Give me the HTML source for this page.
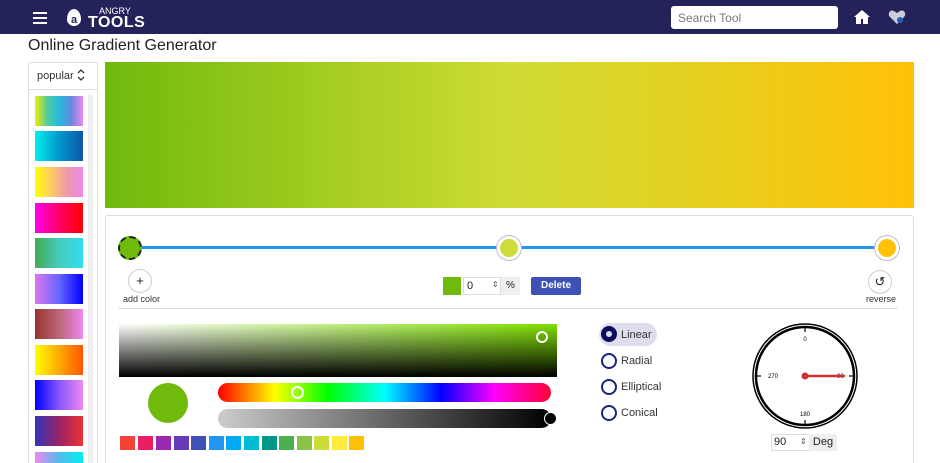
<!DOCTYPE html><html><head><style>
*{box-sizing:border-box;margin:0;padding:0}
html,body{width:940px;height:463px;overflow:hidden}
body{background:#fff;font-family:"Liberation Sans",sans-serif;position:relative;color:#222}
.a{position:absolute}
.sw{position:absolute;left:35px;width:48px;height:30px}
.pal{position:absolute;top:436px;width:15px;height:14px}
.rb{position:absolute;left:601px;width:16px;height:16px;border:2px solid #1a237e;border-radius:50%}
.rl{position:absolute;left:621px;font-size:11px;color:#333}
</style></head><body>
<div class="a" style="left:0;top:0;width:940px;height:34px;background:#23235a"></div>
<div class="a" style="left:33px;top:12px;width:14px;height:2px;background:#fff;box-shadow:0 5px 0 #fff,0 10px 0 #fff"></div>
<div class="a" style="left:67px;top:9px;width:14px;height:17px;border-radius:50% 50% 50% 50%/60% 60% 40% 40%;background:#fff"></div>
<div class="a" style="left:71px;top:14px;font-size:11px;font-weight:bold;color:#23235a">a</div>
<div class="a" style="left:99px;top:6px;font-size:9px;color:#fff">ANGRY</div>
<div class="a" style="left:88px;top:14px;font-size:16px;font-weight:bold;color:#fff;letter-spacing:.5px">TOOLS</div>
<div class="a" style="left:671px;top:6px;width:167px;height:23px;background:#fff;border-radius:3px;font-size:12px;color:#777;padding:5px 7px">Search Tool</div>
<svg class="a" style="left:853px;top:9px" width="18" height="16" viewBox="0 0 18 16"><path d="M9 1L1 8h2v7h5v-5h2v5h5V8h2z" fill="#fff"/></svg>
<svg class="a" style="left:888px;top:9px" width="18" height="16" viewBox="0 0 18 16"><path d="M9 15L2 8C-1 5 2 0 6 2L9 4L12 2C16 0 19 5 16 8z" fill="#ccd"/><circle cx="12" cy="11" r="3" fill="#1e5fb4"/></svg>
<div class="a" style="left:28px;top:37px;font-size:16px;color:#222">Online Gradient Generator</div>
<div class="a" style="left:28px;top:62px;width:70px;height:420px;border:1px solid #ddd;border-radius:3px"></div>
<div class="a" style="left:28px;top:89px;width:70px;height:1px;background:#ddd"></div>
<div class="a" style="left:37px;top:70px;font-size:11px;color:#333">popular</div>
<svg class="a" style="left:77px;top:68px" width="8" height="14" viewBox="0 0 8 14"><path d="M1 5L4 2L7 5M1 9L4 12L7 9" fill="none" stroke="#333" stroke-width="1.3"/></svg>
<div class="a" style="left:88px;top:95px;width:5px;height:368px;background:#eee"></div>
<div class="sw" style="top:96px;background:linear-gradient(90deg,#ee0,#5c9,#2bd,#68d,#e8e)"></div>
<div class="sw" style="top:131px;background:linear-gradient(90deg,#0ee,#09c,#15a)"></div>
<div class="sw" style="top:167px;background:linear-gradient(90deg,#ff0,#fc6,#e9a,#e8e)"></div>
<div class="sw" style="top:203px;background:linear-gradient(90deg,#f0e,#f06,#f00)"></div>
<div class="sw" style="top:238px;background:linear-gradient(90deg,#4a5,#4cb,#3de)"></div>
<div class="sw" style="top:274px;background:linear-gradient(90deg,#d7e,#66f,#00f)"></div>
<div class="sw" style="top:309px;background:linear-gradient(90deg,#933,#b67,#e8e)"></div>
<div class="sw" style="top:345px;background:linear-gradient(90deg,#ff0,#fa0,#f50)"></div>
<div class="sw" style="top:380px;background:linear-gradient(90deg,#00f,#85f,#e8e)"></div>
<div class="sw" style="top:416px;background:linear-gradient(90deg,#33b,#926,#e33)"></div>
<div class="sw" style="top:452px;height:11px;background:linear-gradient(90deg,#e8e,#5be,#0ee)"></div>
<div class="a" style="left:105px;top:62px;width:809px;height:146px;background:linear-gradient(90deg,#6fba0b,#cfdc35 50%,#ffc107)"></div>
<div class="a" style="left:105px;top:215px;width:809px;height:270px;border:1px solid #ddd;border-radius:3px"></div>
<div class="a" style="left:130px;top:246px;width:757px;height:3px;background:#2196f3"></div>
<div class="a" style="left:118px;top:236px;width:24px;height:24px;border-radius:50%;background:#6fba0b;border:2px dashed #222"></div>
<div class="a" style="left:497px;top:236px;width:24px;height:24px;border-radius:50%;background:#cddc39;border:3px solid #fff;box-shadow:0 0 0 1px #bbb"></div>
<div class="a" style="left:875px;top:236px;width:24px;height:24px;border-radius:50%;background:#ffc107;border:3px solid #fff;box-shadow:0 0 0 1px #bbb"></div>
<div class="a" style="left:128px;top:269px;width:24px;height:24px;border-radius:50%;border:1px solid #ccc;text-align:center;font-size:13px;line-height:21px">+</div>
<div class="a" style="left:123px;top:294px;font-size:9px;color:#333">add color</div>
<div class="a" style="left:868px;top:270px;width:24px;height:24px;border-radius:50%;border:1px solid #ccc;text-align:center;font-size:13px;line-height:22px">&#8634;</div>
<div class="a" style="left:866px;top:294px;font-size:9px;color:#333">reverse</div>
<div class="a" style="left:443px;top:277px;width:18px;height:18px;background:#6fba0b"></div>
<div class="a" style="left:463px;top:277px;width:38px;height:18px;border:1px solid #ddd;font-size:11px;padding:2px 3px">0<span style="position:absolute;left:28px;top:2px;font-size:8px;color:#555">&#8661;</span></div>
<div class="a" style="left:501px;top:277px;width:19px;height:18px;background:#eee;font-size:10px;text-align:center;line-height:18px">%</div>
<div class="a" style="left:531px;top:277px;width:50px;height:18px;background:#3f51b5;color:#fff;font-size:10px;font-weight:bold;text-align:center;line-height:18px;border-radius:2px">Delete</div>
<div class="a" style="left:118px;top:308px;width:780px;height:1px;background:#ddd"></div>
<div class="a" style="left:119px;top:324px;width:438px;height:53px;background:linear-gradient(0deg,#000,rgba(0,0,0,0)),linear-gradient(90deg,#fff,#7fe000)"></div>
<div class="a" style="left:536px;top:331px;width:12px;height:12px;border:2px solid #fff;border-radius:50%"></div>
<div class="a" style="left:148px;top:383px;width:40px;height:40px;border-radius:50%;background:#6fba0b"></div>
<div class="a" style="left:218px;top:383px;width:333px;height:19px;border-radius:10px;background:linear-gradient(90deg,#f00,#ff0 17%,#0f0 33%,#0ff 50%,#00f 67%,#f0f 83%,#f03)"></div>
<div class="a" style="left:291px;top:386px;width:13px;height:13px;border:2px solid #fff;border-radius:50%"></div>
<div class="a" style="left:218px;top:409px;width:333px;height:19px;border-radius:10px;background:linear-gradient(90deg,#ccc,#000)"></div>
<div class="a" style="left:544px;top:412px;width:13px;height:13px;background:#000;border:1px solid #fff;border-radius:50%"></div>
<div class="pal" style="left:120px;background:#f44336"></div><div class="pal" style="left:138px;background:#e91e63"></div><div class="pal" style="left:156px;background:#9c27b0"></div><div class="pal" style="left:174px;background:#673ab7"></div><div class="pal" style="left:191px;background:#3f51b5"></div><div class="pal" style="left:209px;background:#2196f3"></div><div class="pal" style="left:226px;background:#03a9f4"></div><div class="pal" style="left:244px;background:#00bcd4"></div><div class="pal" style="left:262px;background:#009688"></div><div class="pal" style="left:279px;background:#4caf50"></div><div class="pal" style="left:297px;background:#8bc34a"></div><div class="pal" style="left:314px;background:#cddc39"></div><div class="pal" style="left:332px;background:#ffeb3b"></div><div class="pal" style="left:349px;background:#ffc107"></div>
<div class="a" style="left:599px;top:323px;width:58px;height:23px;background:#dde;border-radius:12px"></div>
<div class="rb" style="top:326px;border:5px solid #0d0d5e"></div><div class="rl" style="top:329px">Linear</div>
<div class="rb" style="top:353px"></div><div class="rl" style="top:355px">Radial</div>
<div class="rb" style="top:379px"></div><div class="rl" style="top:381px">Elliptical</div>
<div class="rb" style="top:405px"></div><div class="rl" style="top:407px">Conical</div>
<svg class="a" style="left:750px;top:323px" width="110" height="106" viewBox="0 0 110 106"><circle cx="55" cy="53" r="52" fill="#fff" stroke="#000" stroke-width="1.5"/><circle cx="55" cy="53" r="49" fill="none" stroke="#000" stroke-width="2.5"/>
<g stroke="#000" stroke-width="1.2"><line x1="55" y1="4" x2="55" y2="9"/><line x1="55" y1="97" x2="55" y2="102"/><line x1="6" y1="53" x2="11" y2="53"/><line x1="99" y1="53" x2="104" y2="53"/></g>
<text x="55" y="18" font-size="6" text-anchor="middle" font-family="Liberation Sans">0</text><text x="55" y="93" font-size="6" text-anchor="middle" font-family="Liberation Sans">180</text><text x="18" y="55" font-size="6" font-family="Liberation Sans">270</text><text x="87" y="55" font-size="6" font-family="Liberation Sans">90</text>
<line x1="55" y1="53" x2="95" y2="53" stroke="#d32f2f" stroke-width="2.5"/><circle cx="55" cy="53" r="3.5" fill="#d32f2f"/></svg>
<div class="a" style="left:771px;top:434px;width:39px;height:17px;border:1px solid #ddd;font-size:11px;padding:1px 2px">90<span style="position:absolute;left:28px;top:2px;font-size:8px;color:#555">&#8661;</span></div>
<div class="a" style="left:809px;top:434px;width:28px;height:17px;background:#eee;font-size:11px;text-align:center;line-height:17px">Deg</div>
</body></html>
